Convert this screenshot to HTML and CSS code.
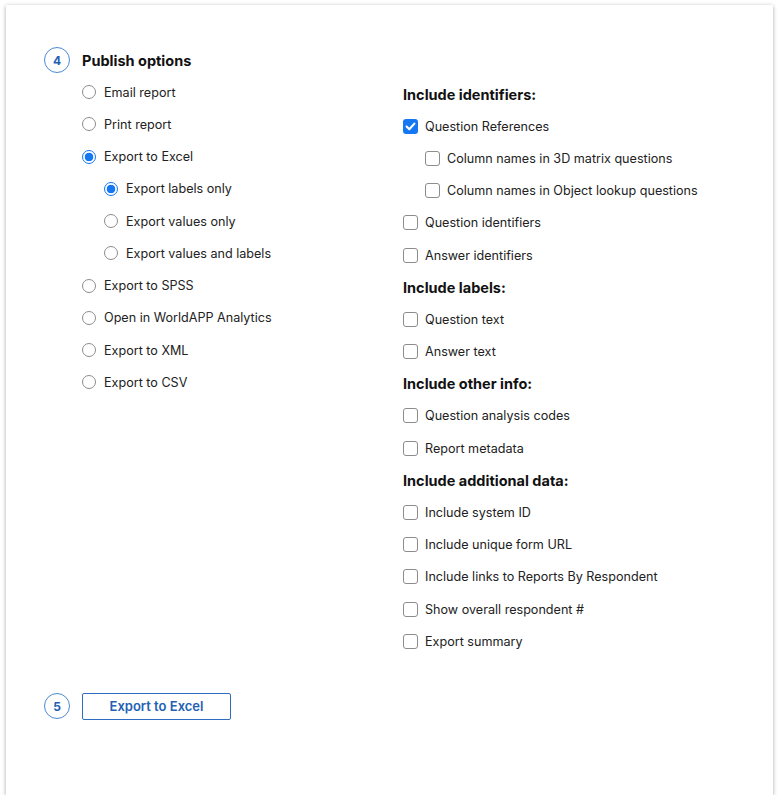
FILE: index.html
```html
<!DOCTYPE html>
<html>
<head>
<meta charset="utf-8">
<link rel="stylesheet" href="styles.css">
</head>
<body>
<div class="card">
  <div class="step-head">
    <span class="step">4</span>
    <span class="step-title">Publish options</span>
  </div>
  <div class="options">
    <div class="col-left">
      <label class="row"><span class="radio"></span>Email report</label>
      <label class="row"><span class="radio"></span>Print report</label>
      <label class="row"><span class="radio on"></span>Export to Excel</label>
      <label class="row sub"><span class="radio on"></span>Export labels only</label>
      <label class="row sub"><span class="radio"></span>Export values only</label>
      <label class="row sub"><span class="radio"></span>Export values and labels</label>
      <label class="row"><span class="radio"></span>Export to SPSS</label>
      <label class="row"><span class="radio"></span>Open in WorldAPP Analytics</label>
      <label class="row"><span class="radio"></span>Export to XML</label>
      <label class="row"><span class="radio"></span>Export to CSV</label>
    </div>
    <div class="col-right">
      <div class="group-title">Include identifiers:</div>
      <label class="row chk"><span class="check on"><svg viewBox="0 0 15 15" width="15" height="15"><path d="M3.6 7.6 L6.3 10.2 L11.4 4.6" fill="none" stroke="#fff" stroke-width="2.1" stroke-linecap="round" stroke-linejoin="round"/></svg></span>Question References</label>
      <label class="row chk sub"><span class="check"></span>Column names in 3D matrix questions</label>
      <label class="row chk sub"><span class="check"></span>Column names in Object lookup questions</label>
      <label class="row chk"><span class="check"></span>Question identifiers</label>
      <label class="row chk"><span class="check"></span>Answer identifiers</label>
      <div class="group-title">Include labels:</div>
      <label class="row chk"><span class="check"></span>Question text</label>
      <label class="row chk"><span class="check"></span>Answer text</label>
      <div class="group-title">Include other info:</div>
      <label class="row chk"><span class="check"></span>Question analysis codes</label>
      <label class="row chk"><span class="check"></span>Report metadata</label>
      <div class="group-title">Include additional data:</div>
      <label class="row chk"><span class="check"></span>Include system ID</label>
      <label class="row chk"><span class="check"></span>Include unique form URL</label>
      <label class="row chk"><span class="check"></span>Include links to Reports By Respondent</label>
      <label class="row chk"><span class="check"></span>Show overall respondent #</label>
      <label class="row chk"><span class="check"></span>Export summary</label>
    </div>
  </div>
  <div class="step-head final">
    <span class="step">5</span>
    <button class="btn">Export to Excel</button>
  </div>
</div>
</body>
</html>
```

FILE: styles.css
```css
* { box-sizing: border-box; }
html, body { margin: 0; padding: 0; background: #ffffff; }
body {
  font-family: Inter, "Noto Sans", sans-serif;
  font-size: 12.6px;
  color: #1b1b1b;
}
.card {
  margin: 5px 0 0 6px;
  width: 767px;
  height: 790px;
  background: #fff;
  box-shadow: 0 1px 4px rgba(0,0,0,0.35);
  padding: 42px 0 0 38px;
}
.step-head {
  display: flex;
  align-items: center;
  gap: 12px;
  height: 26px;
}
.step {
  width: 26px;
  height: 26px;
  border-radius: 50%;
  border: 1.5px solid #4d88d4;
  color: #1f5fb4;
  font-weight: 700;
  font-size: 12px;
  display: flex;
  align-items: center;
  justify-content: center;
}
.step-title {
  font-weight: 700;
  font-size: 14.5px;
  color: #111;
}
.options {
  display: grid;
  grid-template-columns: 321px 1fr;
  margin: 3px 0 0 38px;
}
.col-right { padding-top: 2px; }
.row {
  display: flex;
  align-items: center;
  height: 32.2px;
  gap: 8px;
  color: #222;
}
.col-left .row { height: 32.25px; }
.row.chk { gap: 7px; }
.row.sub { padding-left: 22px; }
.group-title {
  height: 32.2px;
  display: flex;
  align-items: center;
  font-weight: 700;
  font-size: 14.5px;
  color: #111;
}
.radio {
  width: 14px;
  height: 14px;
  border-radius: 50%;
  border: 1px solid #8c8c8c;
  flex: none;
  background: #fff;
}
.radio.on {
  border: 1.5px solid #1677f2;
  background: radial-gradient(circle, #1677f2 0 4px, #fff 4.6px);
}
.check {
  width: 15px;
  height: 15px;
  border-radius: 3px;
  border: 1px solid #8c8c8c;
  flex: none;
  background: #fff;
  display: flex;
}
.check.on {
  border: none;
  background: #1677f2;
}
.final { margin-top: 36px; }
.btn {
  width: 149px;
  height: 27px;
  background: #fff;
  border: 1px solid #2f6dc2;
  border-radius: 2px;
  color: #2361b5;
  font-family: Inter, "Noto Sans", sans-serif;
  font-size: 13px;
  font-weight: 600;
  padding: 0;
}
```
